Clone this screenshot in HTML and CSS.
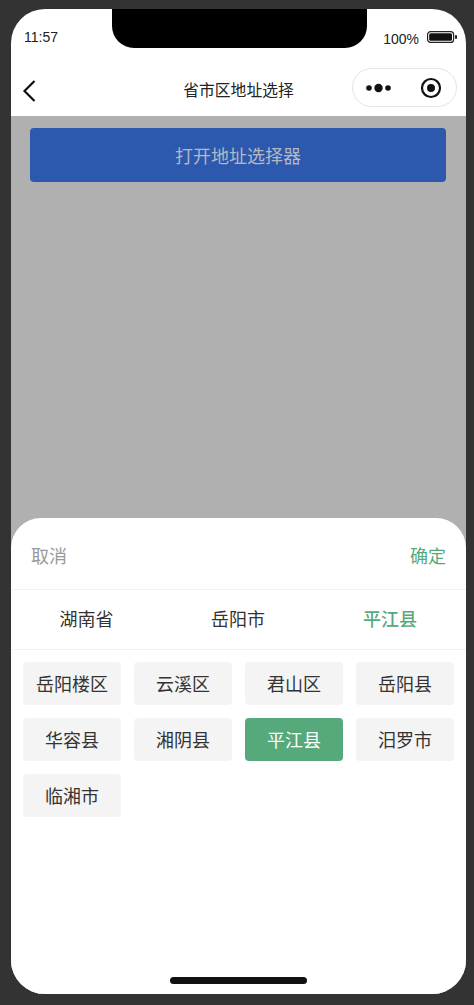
FILE: index.html
```html
<!DOCTYPE html>
<html lang="zh-CN">

<head>
    <meta charset="UTF-8">
    <meta name="viewport" content="width=device-width, initial-scale=1.0">
    <title>省市区地址选择</title>
    <link rel="stylesheet" href="styles.css">
</head>

<body>
    <div class="phone">
        <div class="notch"></div>

        <div class="status-bar">
            <span class="time">11:57</span>
            <div class="battery-wrap">
                <span class="percent">100%</span>
                <svg class="battery" width="30" height="12" viewBox="0 0 30 12">
                    <rect x="0.6" y="0.6" width="26" height="10.8" rx="3" fill="none" stroke="#222" stroke-width="1.2"/>
                    <rect x="2.2" y="2.2" width="22.8" height="7.6" rx="1.5" fill="#111"/>
                    <rect x="28" y="4" width="2" height="4" rx="1" fill="#222"/>
                </svg>
            </div>
        </div>

        <div class="nav-bar">
            <svg class="back" width="14" height="24" viewBox="0 0 14 24">
                <path d="M12.5 2 L2.5 12 L12.5 22" fill="none" stroke="#111" stroke-width="2.2"/>
            </svg>
            <span class="nav-title">省市区地址选择</span>
            <div class="capsule">
                <svg width="32" height="12" viewBox="0 0 32 12">
                    <circle cx="4" cy="6" r="2.8" fill="#111"/>
                    <circle cx="13.5" cy="6" r="4.2" fill="#111"/>
                    <circle cx="23" cy="6" r="2.8" fill="#111"/>
                </svg>
                <svg width="22" height="22" viewBox="0 0 22 22">
                    <circle cx="11" cy="11" r="9" fill="none" stroke="#111" stroke-width="2.2"/>
                    <circle cx="11" cy="11" r="4" fill="#111"/>
                </svg>
            </div>
        </div>

        <div class="content">
            <button class="open-btn">打开地址选择器</button>
        </div>

        <div class="sheet">
            <div class="sheet-head">
                <span class="cancel">取消</span>
                <span class="confirm">确定</span>
            </div>
            <div class="tabs">
                <span class="tab">湖南省</span>
                <span class="tab">岳阳市</span>
                <span class="tab active">平江县</span>
            </div>
            <div class="grid">
                <div class="cell">岳阳楼区</div>
                <div class="cell">云溪区</div>
                <div class="cell">君山区</div>
                <div class="cell">岳阳县</div>
                <div class="cell">华容县</div>
                <div class="cell">湘阴县</div>
                <div class="cell selected">平江县</div>
                <div class="cell">汨罗市</div>
                <div class="cell">临湘市</div>
            </div>
            <div class="home-bar"></div>
        </div>
    </div>
</body>

</html>
```

FILE: styles.css
```css
body {
    margin: 0;
    padding: 9px 8px 11px 11px;
    height: 985px;
    background-color: #333;
    font-family: "Liberation Sans", "Noto Sans CJK SC", sans-serif;
    overflow: hidden;
}

.phone {
    position: relative;
    width: 455px;
    height: 985px;
    display: flex;
    flex-direction: column;
    background-color: #fff;
    border-radius: 34px;
    overflow: hidden;
}

.notch {
    position: absolute;
    top: 0;
    left: 101px;
    width: 255px;
    height: 39px;
    background-color: #000;
    border-radius: 0 0 22px 22px;
}

.status-bar {
    height: 55px;
    display: flex;
    justify-content: space-between;
    padding: 20px 9px 0 13px;
    box-sizing: border-box;
    color: #222;
    font-size: 14px;
}

.battery-wrap {
    display: flex;
    align-items: flex-start;
    gap: 8px;
    padding-top: 2px;
}

.nav-bar {
    position: relative;
    height: 52px;
    flex-shrink: 0;
    display: flex;
    align-items: center;
    justify-content: space-between;
    padding: 0 9px 0 11px;
    box-sizing: border-box;
}

.back {
    margin-top: 1px;
}

.nav-title {
    position: absolute;
    left: 0;
    right: 0;
    top: 14px;
    text-align: center;
    font-size: 15.8px;
    color: #222;
}

.capsule {
    width: 105px;
    height: 39px;
    display: flex;
    align-items: center;
    justify-content: space-between;
    padding: 0 14px 0 12px;
    box-sizing: border-box;
    border: 1px solid #e4e4e4;
    border-radius: 20px;
    margin-bottom: 5px;
}

.content {
    flex: 1;
    background-color: #b0b0b0;
    padding: 12px 20px 0 19px;
}

.open-btn {
    display: block;
    width: 100%;
    height: 54px;
    background-color: #2c59ad;
    color: #b3b8c4;
    font-family: inherit;
    font-size: 18px;
    border: none;
    border-radius: 4px;
}

.sheet {
    position: absolute;
    left: 0;
    right: 0;
    bottom: 0;
    height: 476px;
    background-color: #fff;
    border-radius: 30px 30px 0 0;
}

.sheet-head {
    height: 72px;
    display: flex;
    align-items: center;
    justify-content: space-between;
    padding: 3px 20px 0;
    box-sizing: border-box;
    border-bottom: 1px solid #f2f2f2;
    font-size: 18px;
}

.cancel {
    color: #999;
}

.confirm {
    color: #56a97b;
}

.tabs {
    height: 60px;
    display: grid;
    grid-template-columns: 151px 152px 152px;
    align-items: center;
    text-align: center;
    padding-bottom: 3px;
    box-sizing: border-box;
    border-bottom: 1px solid #f2f2f2;
    font-size: 18px;
    color: #333;
}

.tab.active {
    color: #56a97b;
    font-weight: 500;
}

.grid {
    display: grid;
    grid-template-columns: repeat(4, 98px);
    grid-auto-rows: 43px;
    column-gap: 13px;
    row-gap: 13px;
    padding: 12px 0 0 12px;
}

.cell {
    display: flex;
    justify-content: center;
    align-items: center;
    padding-bottom: 2px;
    box-sizing: border-box;
    background-color: #f4f4f4;
    border-radius: 4px;
    font-size: 18px;
    color: #333;
}

.cell.selected {
    background-color: #56a97b;
    color: #fff;
}

.home-bar {
    position: absolute;
    left: 159px;
    bottom: 10px;
    width: 137px;
    height: 7px;
    background-color: #111;
    border-radius: 4px;
}
```
